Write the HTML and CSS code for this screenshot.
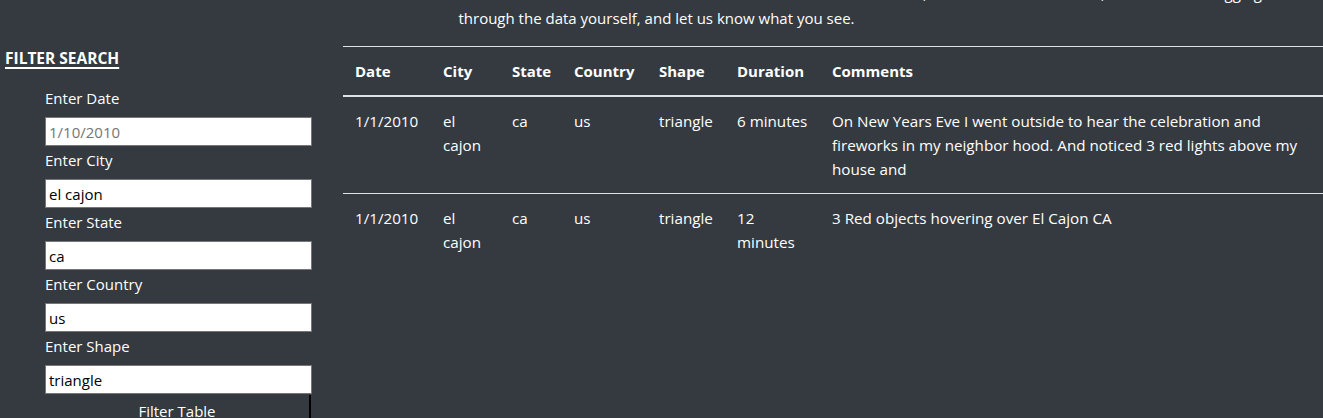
FILE: index.html
```html
<!DOCTYPE html>
<html lang="en">
<head>
<meta charset="utf-8">
<title>UFO Sightings</title>
<link rel="stylesheet" href="styles.css">
</head>
<body>
<p class="intro">The truth is out there. We have collected all the alien encounters that were noted here in the entire nation. Read all the notes, take a look at the details, and then start digging<br>through the data yourself, and let us know what you see.</p>
<div class="layout">
  <aside class="sidebar">
    <div class="filter-title">FILTER SEARCH</div>
    <ul class="filters">
      <li class="filter">
        <label class="filter-label" for="datetime">Enter Date</label>
        <input class="filter-input" id="datetime" type="text" placeholder="1/10/2010">
      </li>
      <li class="filter">
        <label class="filter-label" for="city">Enter City</label>
        <input class="filter-input" id="city" type="text" value="el cajon">
      </li>
      <li class="filter">
        <label class="filter-label" for="state">Enter State</label>
        <input class="filter-input" id="state" type="text" value="ca">
      </li>
      <li class="filter">
        <label class="filter-label" for="country">Enter Country</label>
        <input class="filter-input" id="country" type="text" value="us">
      </li>
      <li class="filter filter-last">
        <label class="filter-label" for="shape">Enter Shape</label>
        <input class="filter-input" id="shape" type="text" value="triangle">
      </li>
      <li class="filter-action">
        <button class="filter-btn" type="button">Filter Table</button>
      </li>
    </ul>
  </aside>
  <main class="content">
    <table class="ufo-table">
      <colgroup>
        <col class="c-date"><col class="c-city"><col class="c-state"><col class="c-country"><col class="c-shape"><col class="c-duration"><col class="c-comments">
      </colgroup>
      <thead>
        <tr>
          <th>Date</th><th>City</th><th>State</th><th>Country</th><th>Shape</th><th>Duration</th><th>Comments</th>
        </tr>
      </thead>
      <tbody>
        <tr>
          <td>1/1/2010</td><td>el cajon</td><td>ca</td><td>us</td><td>triangle</td><td>6 minutes</td>
          <td>On New Years Eve I went outside to hear the celebration and fireworks in my neighbor hood. And noticed 3 red lights above my house and</td>
        </tr>
        <tr>
          <td>1/1/2010</td><td>el cajon</td><td>ca</td><td>us</td><td>triangle</td><td>12 minutes</td>
          <td>3 Red objects hovering over El Cajon CA</td>
        </tr>
      </tbody>
    </table>
  </main>
</div>
</body>
</html>
```
FILE: styles.css
```css
html, body {
  margin: 0;
  padding: 0;
  background: #343a40;
  overflow: hidden;
}
body {
  font-family: "Open Sans", "Noto Sans", sans-serif;
  font-size: 15px;
  line-height: 24px;
  color: #ffffff;
  height: 418px;
}
.intro {
  margin: -19px 10px 15px 0;
  line-height: 25px;
  text-align: center;
  white-space: nowrap;
}
.layout {
  display: flex;
  align-items: flex-start;
}
.sidebar {
  width: 338px;
  flex: 0 0 338px;
  padding-left: 5px;
}
.filter-title {
  font-size: 15.5px;
  font-weight: 700;
  text-decoration: underline;
  text-decoration-thickness: 2px;
  text-underline-offset: 3px;
}
.filters {
  list-style: none;
  margin: 16px 0 0 0;
  padding: 0 0 0 40px;
}
.filter {
  display: flex;
  flex-direction: column;
  align-items: flex-start;
  margin-bottom: 2px;
}
.filter-last {
  margin-bottom: 0;
}
.filter-label {
  display: block;
  line-height: 24px;
  margin-bottom: 7px;
}
.filter-input {
  box-sizing: border-box;
  width: 267px;
  height: 29px;
  margin: 0;
  padding: 1px 3px;
  border: 1px solid #767676;
  background: #ffffff;
  color: #000000;
  font-family: "Open Sans", "Noto Sans", sans-serif;
  font-size: 15px;
  outline: none;
}
.filter-input::placeholder {
  color: #757575;
}
.filter-btn {
  box-sizing: border-box;
  display: block;
  width: 266px;
  height: 30px;
  margin: 1px 0 0 0;
  padding: 1px 0 0 0;
  background: transparent;
  color: #ffffff;
  border: 0;
  border-right: 2px solid #000000;
  font-family: "Open Sans", "Noto Sans", sans-serif;
  font-size: 15px;
  line-height: 24px;
  text-align: center;
}
.content {
  flex: 1 1 auto;
}
.ufo-table {
  width: 981px;
  table-layout: fixed;
  border-collapse: collapse;
  color: #ffffff;
}
.c-date { width: 88px; }
.c-city { width: 69px; }
.c-state { width: 62px; }
.c-country { width: 85px; }
.c-shape { width: 78px; }
.c-duration { width: 95px; }
.c-comments { width: 504px; }
.ufo-table th,
.ufo-table td {
  padding: 12px;
  vertical-align: top;
  text-align: left;
  border-top: 1px solid #dee2e6;
}
.ufo-table td {
  font-size: 15.2px;
}
.ufo-table th {
  font-weight: 700;
  border-bottom: 2px solid #dee2e6;
  white-space: nowrap;
}
```
